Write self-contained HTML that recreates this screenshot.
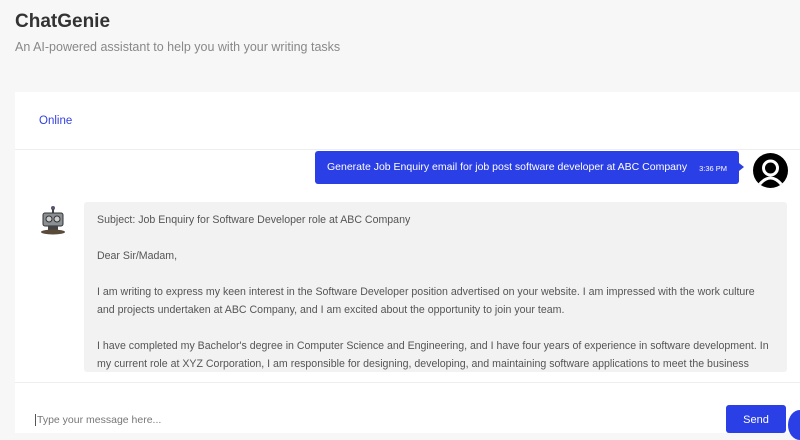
<!DOCTYPE html>
<html><head><style>
*{margin:0;padding:0;box-sizing:border-box}
body{width:800px;height:433px;overflow:hidden;background:#f7f7f7;font-family:"Liberation Sans",sans-serif;position:relative}
h1{position:absolute;left:15px;top:11px;font-size:19px;font-weight:bold;color:#333}
.sub{position:absolute;left:15px;top:40px;font-size:12.5px;color:#888}
.card{position:absolute;left:15px;top:92px;width:785px;height:341px;background:#fff}
.online{position:absolute;left:24px;top:23px;font-size:11.5px;color:#3340e0}
.hl{position:absolute;left:0;right:0;top:57px;border-top:1px solid #eee}
.ub{position:absolute;left:300px;top:59px;width:424px;height:33px;background:#2b3fe6;border-radius:3px;color:#fff;font-size:10.5px;padding:10px 12px}
.ub span{font-size:7.5px;position:absolute;right:12px;top:13px}
.tri{position:absolute;left:724px;top:71px;border-left:5px solid #2b3fe6;border-top:4px solid transparent;border-bottom:4px solid transparent}
.av{position:absolute;left:738px;top:61px;width:35px;height:35px;border-radius:50%;background:#000;overflow:hidden}
.bb{position:absolute;left:69px;top:110px;width:703px;height:170px;background:#f2f2f2;border-radius:3px;padding:9px 13px;font-size:10.6px;color:#555;line-height:18px;overflow:hidden}
.bb p{margin-bottom:18px}
.fl{position:absolute;left:0;right:0;top:290px;border-top:1px solid #eee}
.inp{position:absolute;left:20px;top:322px;font-size:10.5px;color:#777;border-left:1px solid #555;padding-left:1px}
.send{position:absolute;left:711px;top:313px;width:60px;height:28px;background:#2b3fe6;color:#fff;font-size:11px;text-align:center;line-height:30px;border-radius:3px}
</style></head><body>
<h1>ChatGenie</h1>
<div class="sub">An AI-powered assistant to help you with your writing tasks</div>
<div class="card">
<div class="online">Online</div>
<div class="hl"></div>
<div class="ub">Generate Job Enquiry email for job post software developer at ABC Company<span>3:36 PM</span></div>
<div class="tri"></div>
<div class="av"><svg width="35" height="35"><circle cx="17.5" cy="15" r="7" fill="none" stroke="#fff" stroke-width="3"/><path d="M6 32 Q17.5 18 29 32" fill="none" stroke="#fff" stroke-width="3"/></svg></div>
<svg style="position:absolute;left:24px;top:113px" width="28" height="30"><circle cx="14" cy="3" r="2" fill="#557"/><rect x="13" y="4" width="2" height="4" fill="#444"/><rect x="4" y="8" width="20" height="13" rx="2" fill="#8a8f94" stroke="#333"/><circle cx="10" cy="14" r="3" fill="#ccc" stroke="#333"/><circle cx="18" cy="14" r="3" fill="#ccc" stroke="#333"/><rect x="9" y="21" width="10" height="4" fill="#444"/><ellipse cx="14" cy="27" rx="12" ry="2.5" fill="#5a4a3a"/></svg>
<div class="bb">
<p>Subject: Job Enquiry for Software Developer role at ABC Company</p>
<p>Dear Sir/Madam,</p>
<p>I am writing to express my keen interest in the Software Developer position advertised on your website. I am impressed with the work culture and projects undertaken at ABC Company, and I am excited about the opportunity to join your team.</p>
<p>I have completed my Bachelor's degree in Computer Science and Engineering, and I have four years of experience in software development. In my current role at XYZ Corporation, I am responsible for designing, developing, and maintaining software applications to meet the business requirements of our clients and I have worked on several large-scale projects.</p>
</div>
<div class="fl"></div>
<div class="inp">Type your message here...</div>
<div class="send">Send</div>
<div style="position:absolute;left:773px;top:318px;width:24px;height:30px;border-radius:50%;background:#2b3fe6"></div>
</div>
</body></html>
